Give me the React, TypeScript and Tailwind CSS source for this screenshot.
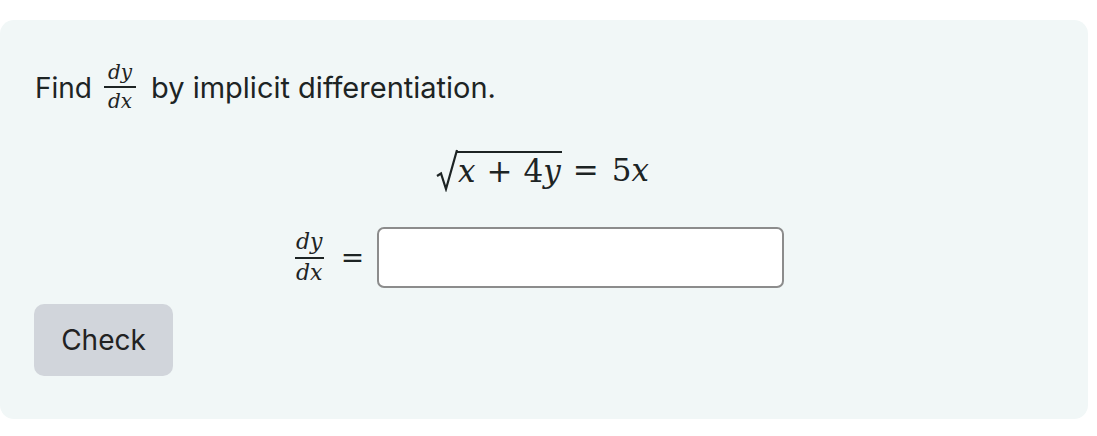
import React from "react";

const mathFont = { fontFamily: '"DejaVu Serif", "Liberation Serif", serif' };

export default function App() {
  return (
    <div className="w-[1097px] h-[436px] bg-white pt-[20px]">
      <div
        className="w-[1088px] h-[399px] rounded-[14px] bg-[#f1f7f7] text-[#1d2424] pl-[35px] pt-[40px] flex flex-col"
        style={{ fontFamily: 'Inter, "Noto Sans", sans-serif' }}
      >
        <div className="flex items-center text-[28px] leading-none h-[53px]">
          <span className="mt-[2px]">Find</span>
          <span className="inline-flex flex-col items-center italic leading-none text-[20px] ml-[12px] mr-[15px]" style={mathFont}>
            <span className="pb-[4px]">dy</span>
            <span className="block w-[32px] h-[2px] bg-[#1d2424]" />
            <span className="pt-[3px]">dx</span>
          </span>
          <span className="mt-[2px] text-[29px]">by implicit differentiation.</span>
        </div>

        <div className="flex justify-center pr-[38px] mt-[32px]">
          <div className="flex items-center text-[31px] leading-none" style={mathFont}>
            <svg width="22" height="43" viewBox="0 0 22 43" className="mt-[4px]">
              <path d="M1 27 L5 24.5 L10 40 L21 1" fill="none" stroke="#1d2424" strokeWidth="2.2" strokeLinejoin="miter" />
            </svg>
            <span className="border-t-[2px] border-[#1d2424] pt-[3px] pl-[1px] pr-[1px] italic -ml-[1px]">
              x<span className="not-italic px-[11px]">+</span><span className="not-italic">4</span>y
            </span>
            <span className="pl-[11px] pr-[13px] mt-[4px]">=</span>
            <span className="mt-[4px]">5<span className="italic">x</span></span>
          </div>
        </div>

        <div className="flex justify-center items-center pr-[44px] mt-[35px]">
          <span className="inline-flex flex-col items-center italic leading-none text-[22px]" style={mathFont}>
            <span className="pb-[4px]">dy</span>
            <span className="block w-[29px] h-[2px] bg-[#1d2424]" />
            <span className="pt-[3px]">dx</span>
          </span>
          <span className="text-[28px] leading-none ml-[17px] mr-[13px]" style={mathFont}>=</span>
          <div className="w-[407px] h-[61px] bg-white border-2 border-[#8c8c8c] rounded-[7px]" />
        </div>

        <button className="mt-[16px] w-[139px] h-[72px] rounded-[10px] bg-[#d1d5db] text-[28px] text-[#222] flex items-center justify-center -ml-[1px]">
          Check
        </button>
      </div>
    </div>
  );
}
